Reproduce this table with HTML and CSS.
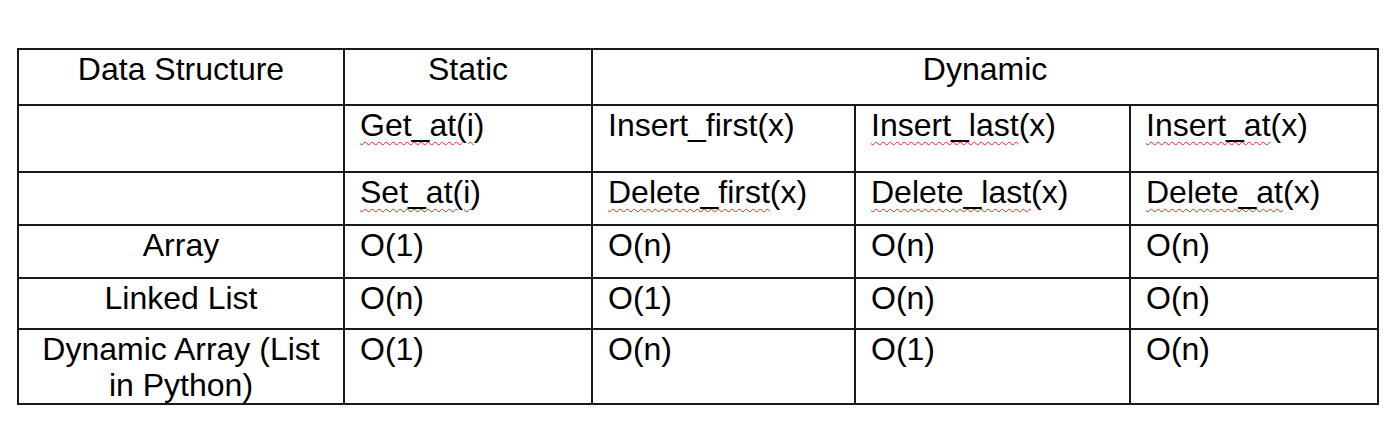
FILE: index.html
```html
<!DOCTYPE html>
<html>
<head>
<meta charset="utf-8">
<link rel="stylesheet" href="styles.css">
</head>
<body>
<table class="ds">
  <colgroup>
    <col class="c1"><col class="c2"><col class="c3"><col class="c4"><col class="c5">
  </colgroup>
  <tr class="r1">
    <td class="ctr">Data Structure</td>
    <td class="ctr">Static</td>
    <td class="ctr" colspan="3">Dynamic</td>
  </tr>
  <tr class="r2">
    <td></td>
    <td><span class="sp">Get_at(i</span>)</td>
    <td>Insert_first(x)</td>
    <td><span class="sp">Insert_last</span>(x)</td>
    <td><span class="sp">Insert_at</span>(x)</td>
  </tr>
  <tr class="r3">
    <td></td>
    <td><span class="sp">Set_at(i</span>)</td>
    <td><span class="sp">Delete_first</span>(x)</td>
    <td><span class="sp">Delete_last</span>(x)</td>
    <td><span class="sp">Delete_at</span>(x)</td>
  </tr>
  <tr class="r4">
    <td class="ctr">Array</td>
    <td>O(1)</td>
    <td>O(n)</td>
    <td>O(n)</td>
    <td>O(n)</td>
  </tr>
  <tr class="r5">
    <td class="ctr">Linked List</td>
    <td>O(n)</td>
    <td>O(1)</td>
    <td>O(n)</td>
    <td>O(n)</td>
  </tr>
  <tr class="r6">
    <td class="ctr">Dynamic Array (List in Python)</td>
    <td>O(1)</td>
    <td>O(n)</td>
    <td>O(1)</td>
    <td>O(n)</td>
  </tr>
</table>
</body>
</html>
```
FILE: styles.css
```css
html, body {
  margin: 0;
  padding: 0;
  background: #ffffff;
}
body {
  font-family: "Liberation Sans", Arial, sans-serif;
  font-size: 32px;
  color: #000000;
  padding: 48px 0 0 17px;
}
.ds {
  border-collapse: collapse;
  table-layout: fixed;
  width: 1360px;
  border: 2px solid #3a3a3a;
}
.c1 { width: 326px; }
.c2 { width: 248px; }
.c3 { width: 263px; }
.c4 { width: 275px; }
.c5 { width: 248px; }
.ds td {
  border: 2px solid #1a1a1a;
  vertical-align: top;
  padding: 1px 8px 0 15px;
  line-height: 36px;
  white-space: normal;
}
.ds td.ctr {
  text-align: center;
  padding: 1px 16px 0 16px;
}
.r1 { height: 56px; }
.r2 { height: 67px; }
.r3 { height: 53px; }
.r4 { height: 53px; }
.r5 { height: 51px; }
.r6 { height: 75px; }
.sp {
  text-decoration-line: underline;
  text-decoration-style: wavy;
  text-decoration-color: #e8271d;
  text-decoration-thickness: 1px;
  text-underline-offset: 5px;
  text-decoration-skip-ink: auto;
}
```
